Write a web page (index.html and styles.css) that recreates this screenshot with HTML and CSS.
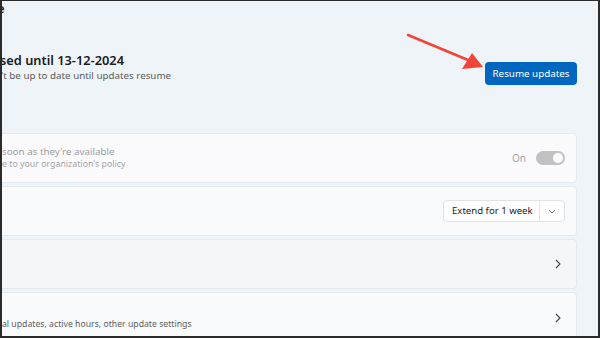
FILE: index.html
```html
<!DOCTYPE html>
<html lang="en">

<head>
  <meta charset="UTF-8" />
  <meta name="viewport" content="width=device-width, initial-scale=1.0" />
  <title>Windows Update</title>
  <link rel="stylesheet" href="styles.css">
</head>

<body>
  <div class="frame">
    <div class="title">e</div>

    <div class="status">
      <div class="status-text">
        <h2>sed until 13-12-2024</h2>
        <p>'t be up to date until updates resume</p>
      </div>
      <button class="btn-primary">Resume updates</button>
    </div>

    <div class="cards">
      <div class="card card-light">
        <div class="card-text disabled">
          <div class="card-title">soon as they're available</div>
          <div class="card-sub">e to your organization's policy</div>
        </div>
        <div class="card-action">
          <span class="toggle-label">On</span>
          <span class="toggle"><span class="knob"></span></span>
        </div>
      </div>

      <div class="card">
        <div class="card-text"></div>
        <div class="card-action">
          <div class="dropdown">
            <span class="dropdown-label">Extend for 1 week</span>
            <span class="dropdown-arrow">
              <svg width="8" height="5" viewBox="0 0 8 5"><path d="M1 1l3 3 3-3" fill="none" stroke="#666" stroke-width="0.9" /></svg>
            </span>
          </div>
        </div>
      </div>

      <div class="card card-grey">
        <div class="card-text"></div>
        <div class="card-action">
          <svg class="chevron" width="6" height="10" viewBox="0 0 6 10"><path d="M1 1l4 4-4 4" fill="none" stroke="#444" stroke-width="1.1" /></svg>
        </div>
      </div>

      <div class="card card-last">
        <div class="card-text">
          <div class="card-title">&nbsp;</div>
          <div class="card-sub dark">al updates, active hours, other update settings</div>
        </div>
        <div class="card-action">
          <svg class="chevron" width="6" height="10" viewBox="0 0 6 10"><path d="M1 1l4 4-4 4" fill="none" stroke="#444" stroke-width="1.1" /></svg>
        </div>
      </div>
    </div>

    <!-- red annotation arrow -->
    <svg class="arrow" width="600" height="338" viewBox="0 0 600 338">
      <line x1="408" y1="35" x2="468" y2="60" stroke="#f0463a" stroke-width="2.6" stroke-linecap="round" />
      <polygon points="483,67 472,53 462,69" fill="#f0463a" />
    </svg>
  </div>
</body>

</html>
```

FILE: styles.css
```css
* {
  margin: 0;
  padding: 0;
  box-sizing: border-box;
}

body {
  width: 600px;
  height: 338px;
  overflow: hidden;
  font-family: "Segoe UI", "Noto Sans", "Open Sans", sans-serif;
  color: #1b1b1b;
}

.frame {
  position: relative;
  width: 600px;
  height: 338px;
  background: #eff4f9;
  border-top: 1px solid #2b2b2b;
  border-left: 2px solid #2b2b2b;
  border-right: 2px solid #2b2b2b;
  border-bottom: 2px solid #2b2b2b;
  overflow: hidden;
}

.title {
  height: 14px;
  margin-left: -5px;
  font-size: 13px;
  line-height: 14px;
  font-weight: 600;
}

.status {
  display: flex;
  justify-content: space-between;
  align-items: flex-end;
  padding-right: 21px;
  height: 73px;
}

.status-text {
  padding-bottom: 5px;
}

.status-text h2 {
  font-size: 12.8px;
  font-weight: 600;
  line-height: 17px;
  margin-left: -2px;
}

.status-text p {
  font-size: 9.8px;
  line-height: 14px;
  color: #5c5c5c;
  margin-left: -1px;
}

.btn-primary {
  width: 92px;
  height: 23px;
  border: none;
  border-radius: 4px;
  background: #0067c0;
  color: #fff;
  font-family: inherit;
  font-size: 9.8px;
  margin-bottom: 3px;
}

.cards {
  display: flex;
  flex-direction: column;
  gap: 3px;
  margin-top: 45px;
  margin-left: -20px;
  width: 595px;
}

.card {
  display: flex;
  justify-content: space-between;
  align-items: center;
  height: 50px;
  background: #f9fafc;
  border: 1px solid #e6e9ee;
  border-radius: 4px;
  padding: 0 11px 0 19px;
}

.card-light {
  background: #fbfbfd;
}

.card-grey {
  background: #f5f6f9;
}

.card-last {
  height: 52px;
  background: #fafbfd;
}

.card-text {
  display: flex;
  flex-direction: column;
}

.card-title {
  font-size: 9.8px;
  line-height: 13px;
}

.card-sub {
  font-size: 8.8px;
  line-height: 13px;
}

.disabled .card-title {
  color: #a0a0a0;
}

.disabled .card-sub {
  color: #a4a4a4;
}

.card-sub.dark {
  font-size: 8.7px;
  color: #5e5e5e;
}

.card-action {
  display: flex;
  align-items: center;
}

.toggle-label {
  font-size: 10px;
  color: #a3a3a3;
  margin-right: 10px;
}

.toggle {
  display: flex;
  align-items: center;
  justify-content: flex-end;
  width: 29px;
  height: 14px;
  border-radius: 7px;
  background: #c2c2c2;
  padding-right: 2px;
}

.knob {
  width: 10px;
  height: 10px;
  border-radius: 50%;
  background: #fff;
}

.dropdown {
  display: flex;
  height: 22px;
  background: #fff;
  border: 1px solid #e3e3e3;
  border-radius: 4px;
  font-size: 9.6px;
}

.dropdown-label {
  width: 96px;
  padding-left: 8px;
  line-height: 20px;
  white-space: nowrap;
  border-right: 1px solid #e3e3e3;
}

.dropdown-arrow {
  display: flex;
  align-items: center;
  justify-content: center;
  width: 24px;
}

.chevron {
  margin-right: 4px;
}

.arrow {
  position: absolute;
  left: -2px;
  top: -1px;
  pointer-events: none;
}
```
